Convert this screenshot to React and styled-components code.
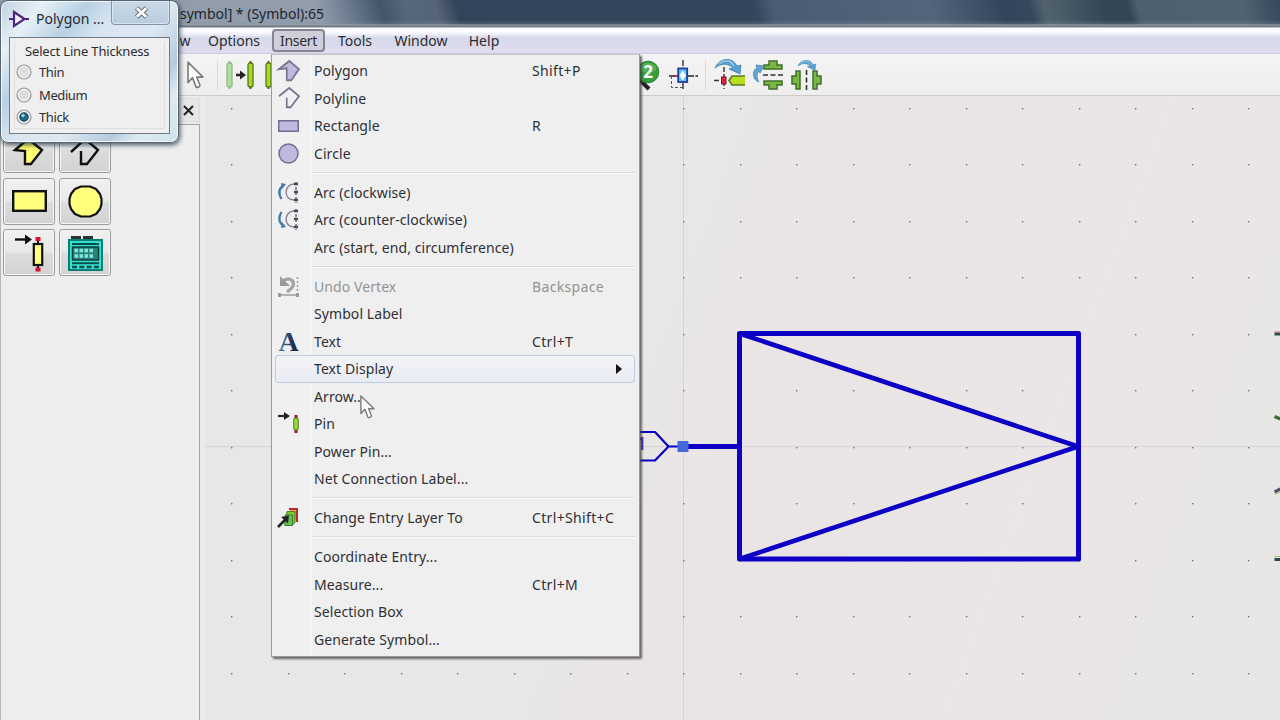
import React from 'react';
import styled, { createGlobalStyle, css } from 'styled-components';

const GlobalStyle = createGlobalStyle`
  * {
    box-sizing: border-box;
  }

  body {
    margin: 0;
    overflow: hidden;
    font-family: 'Noto Sans', 'Open Sans', sans-serif;
    font-size: 14px;
    color: #2c2c30;
  }

  svg {
    display: block;
    flex: none;
    overflow: visible;
  }
`;

const StyledWindow = styled.div`
  position: relative;
  display: flex;
  flex-direction: column;
  width: 1280px;
  height: 720px;
  overflow: hidden;
  background: #efefef;
`;

const StyledTitleBar = styled.header`
  flex: none;
  height: 28px;
  padding: 4px 0 0 180px;
  background: linear-gradient(
      to bottom,
      transparent 20px,
      rgba(130, 145, 155, 0.3) 24px,
      #a0a9b3 25px,
      #59636f 26px,
      #8d96a0 27px,
      #e3e4ec 28px
    ),
    linear-gradient(
      74deg,
      #929dac 0,
      #929dac 310px,
      #66768a 345px,
      #44546a 372px,
      #56677b 395px,
      #566579 425px,
      #33445a 445px,
      #34465c 730px,
      #4a5c74 750px,
      #53657a 900px,
      #33455b 970px,
      #34475c 995px,
      #52636f 1010px,
      #344755 1065px,
      #334655 1090px,
      #4e606e 1100px,
      #516270 1200px,
      #33465c 1240px,
      #33465c 1276px,
      #5c4a48 1279px
    );
  line-height: 19px;
  letter-spacing: 0;
  color: #20242c;
  white-space: nowrap;
`;

const StyledMenuBar = styled.nav`
  display: flex;
  flex: none;
  height: 26px;
  padding: 1px 0 0 173px;
  border-bottom: 1px solid #cfccd9;
  background: linear-gradient(#fafaff 0, #fafaff 4px, #ebebf7 7px, #d6daea 9px, #e0dcf0 100%);
`;

const StyledMenuTitle = styled.button`
  width: ${({ $width }) => $width}px;
  height: 23px;
  margin: 0 ${({ $gap = 4 }) => $gap}px 0 0;
  padding: 0;
  border: 1px solid transparent;
  border-radius: 4px;
  background: none;
  font: inherit;
  line-height: 22px;
  color: inherit;

  ${({ $open }) =>
    $open &&
    css`
      border: 2px solid #85838f;
      background: linear-gradient(#cfced8, #d0cedd);
      line-height: 20px;
      letter-spacing: -0.3px;
    `}
`;

const StyledToolbar = styled.div`
  display: flex;
  flex: none;
  align-items: center;
  height: 42px;
  padding-left: 187px;
  border-bottom: 1px solid #cacaca;
  background: linear-gradient(#f4f4f5, #eeeeef);
`;

const StyledTool = styled.span`
  margin-left: ${({ $gap = 0 }) => $gap}px;
`;

const StyledToolDivider = styled.span`
  width: 1px;
  height: 30px;
  margin-left: ${({ $gap = 0 }) => $gap}px;
  background: #dadada;
`;

const StyledWorkspace = styled.main`
  display: flex;
  flex: 1;
  min-height: 0;
`;

const StyledSidebar = styled.aside`
  flex: none;
  width: 205px;
  padding-top: 2px;
  background: #ebebeb;
`;

const StyledSidebarHeader = styled.div`
  display: flex;
  align-items: center;
  justify-content: flex-end;
  width: 200px;
  height: 24px;
  padding-right: 6px;
  border: 1px solid #dcdcdc;
  background: #e6e6e6;
`;

const StyledPalette = styled.div`
  display: grid;
  grid-template-columns: repeat(2, 52px);
  grid-auto-rows: 47px;
  grid-gap: 4.5px 4px;
  width: 200px;
  height: 600px;
  margin-top: 2px;
  padding: 1px 0 0 2px;
  border: 1px solid #a3a3a3;
  border-left-color: #b5b5b5;
  background: #eeeeee;
`;

const StyledPaletteButton = styled.button`
  display: flex;
  align-items: center;
  justify-content: center;
  padding: ${({ $drop = 0 }) => $drop}px 0 0;
  border: 1px solid #9b9b9b;
  border-radius: 3px;
  background: linear-gradient(#f1f1f1 0, #e8e8e8 48%, #dcdcdc 54%, #d2d2d2 100%);
  box-shadow: inset 0 0 0 1px #f6f6f6;
`;

const StyledCanvas = styled.div`
  flex: 1;
  min-width: 0;
  background: linear-gradient(110deg, #e8e6e6 0, #e8e7e6 42%, #eae5e4 52%, #e9e6e5 74%, #e8e7e6 100%);
`;

const StyledMenu = styled.div`
  position: absolute;
  top: 54px;
  left: 271px;
  width: 369px;
  height: 603px;
  padding: 2px 4px 0 3px;
  border: 1px solid #9a9a9a;
  border-top-color: #c6c4cf;
  background: linear-gradient(
    to right,
    #f0f0f1 0,
    #f0f0f1 37px,
    #e4e4e5 37px,
    #fafafa 38px,
    #efeff0 40px,
    #efefef 100%
  );
  box-shadow: 2px 2px 2px rgba(60, 60, 60, 0.75);
`;

const StyledMenuItem = styled.div`
  display: grid;
  grid-template-columns: 38px 218px 1fr 18px;
  align-items: center;
  height: 27.54px;
  border: 1px solid transparent;
  border-radius: 3px;
  white-space: nowrap;
  color: ${({ $disabled }) => ($disabled ? '#939393' : '#303034')};

  ${({ $active }) =>
    $active &&
    css`
      border-color: #bfcbe4;
      background: linear-gradient(rgba(243, 244, 248, 0.9), rgba(232, 235, 243, 0.9));
    `}
`;

const StyledMenuLabel = styled.span`
  letter-spacing: ${({ $tracking = 0.08 }) => $tracking}px;
`;

const StyledMenuDivider = styled.div`
  height: 2px;
  margin: 4.7px 0 4.7px 37px;
  border-top: 1px solid #dcdcdc;
  border-bottom: 1px solid #fafafa;
`;

const StyledDialog = styled.section`
  position: absolute;
  top: 0;
  left: 0;
  width: 179px;
  height: 143px;
  padding: 0 8px 8px;
  border: 1px solid #56636e;
  border-radius: 8px;
  background: linear-gradient(
    130deg,
    #c0d2e2 0,
    #e5f0f6 15%,
    #b8d0e4 30%,
    #d9e6f1 43%,
    #dbe8f2 60%,
    #b7cadd 76%,
    #dceaf3 85%,
    #cfe2ec 100%
  );
  box-shadow:
    inset 0 0 0 1px rgba(245, 252, 255, 0.9),
    1px 2px 5px rgba(20, 35, 50, 0.75);
`;

const StyledDialogTitle = styled.div`
  display: flex;
  align-items: flex-start;
  height: 36px;
  color: #262a33;

  svg {
    margin-top: 9px;
  }

  span {
    width: 76px;
    margin: 8px 0 0 7px;
    white-space: nowrap;
  }
`;

const StyledDialogClose = styled.button`
  display: flex;
  align-items: flex-start;
  justify-content: center;
  width: 59px;
  height: 24px;
  padding: 0 0 0 2px;
  border: 1px solid #8494a8;
  border-top: 0;
  border-radius: 0 0 4px 4px;
  background: linear-gradient(#c9d8e6, #b9ccdf);
  box-shadow: inset 0 0 0 1px rgba(235, 244, 250, 0.6);

  svg {
    margin-top: 5px;
  }
`;

const StyledDialogBody = styled.div`
  height: 97px;
  padding: 4px 4px;
  border: 1px solid #6f7a84;
  background: #efefef;
  font-size: 13px;
`;

const StyledGroup = styled.fieldset`
  height: 87px;
  margin: 0;
  padding: 0 0 0 1px;
  border: 1px solid #dedede;
  border-top: 0;
`;

const StyledGroupTitle = styled.div`
  margin-left: 9px;
  height: 19px;
  line-height: 19px;
  letter-spacing: -0.17px;
  white-space: nowrap;
`;

const StyledRadio = styled.label`
  display: flex;
  align-items: center;
  height: 22.5px;
  letter-spacing: -0.4px;

  span {
    margin-left: 7px;
  }
`;

const StyledCursor = styled.div`
  position: absolute;
  top: 395px;
  left: 360px;
`;

const PointerIcon = ({ width = 17, height = 28 }) => (
  <svg width={width} height={height} viewBox="0 0 17 26" preserveAspectRatio="none">
    <path
      d="M1 1v19l4.5-4.5 3.5 8.5c1 1.2 4 0 4-1.5l-3.2-7.6H16z"
      fill="#fbfbfb"
      stroke="#7b7b7b"
      strokeWidth="1.6"
      strokeLinejoin="round"
    />
  </svg>
);

const Bar = ({ x, pale }) => (
  <g>
    <path d={`M${x + 2.5} 0v28`} stroke={pale ? '#8fb985' : '#4c6b1c'} strokeWidth="2" />
    <rect
      x={x}
      y="2"
      width="5"
      height="24"
      rx="2"
      fill={pale ? '#b3dea3' : '#a8da1e'}
      stroke={pale ? '#8dbb84' : '#55761d'}
      strokeWidth="1.3"
    />
  </g>
);

const ReplacePinIcon = () => (
  <svg width="43" height="28" viewBox="0 0 43 28">
    <Bar x={0} pale />
    <Bar x={21} />
    <Bar x={39} />
    <path d="M9 14h5" stroke="#222" strokeWidth="2.6" />
    <path d="M13 9.5l6 4.5-6 4.5z" fill="#222" />
  </svg>
);

const ZoomTwoIcon = () => (
  <svg width="28" height="30" viewBox="0 0 28 30">
    <path d="M9 20l9 9" stroke="#222" strokeWidth="4" />
    <circle cx="17" cy="12" r="10.8" fill="#35a13c" stroke="#258030" />
    <ellipse cx="17" cy="8" rx="8" ry="5" fill="#69bc62" opacity="0.6" />
    <text x="17" y="18" fill="#fff" fontSize="17" fontWeight="700" textAnchor="middle">
      2
    </text>
  </svg>
);

const OriginIcon = () => (
  <svg width="30" height="30" viewBox="0 0 30 30">
    <path d="M15 0v8M15 23v7M1 16h9M20 16h10" stroke="#222" strokeWidth="1.3" strokeDasharray="6 1.5" />
    <path d="M3.500 16v11.500h11" fill="none" stroke="#555" strokeDasharray="3 2" />
    <path d="M5 16h5" stroke="#a11d4a" strokeWidth="1.6" />
    <rect x="10.2" y="8.500" width="9" height="13.500" fill="#5ec8f5" stroke="#233aa2" strokeWidth="1.8" />
    <path d="M14.700 10.500l3.300 5-3.300 5-3.300-5z" fill="#effcff" />
  </svg>
);

const RotateArrow = () => (
  <>
    <path d="M0 9C4-1 17-3 22 7l4-1-1 9-11-5 4-1C13 4 6 4 0 9z" fill="#5a9fce" stroke="#3e82b3" strokeWidth="0.8" />
    <path d="M4 5c5-5 12-4 15 2" fill="none" stroke="#a5d0ea" strokeWidth="1.3" />
  </>
);

const RotateIcon = () => (
  <svg width="31" height="31" viewBox="0 0 31 31">
    <path d="M10 8v22M0 21.500h9" stroke="#333" strokeWidth="1.4" strokeDasharray="5 2" />
    <path d="M15 21.500l3-4.500h13v9H18z" fill="#b6df22" />
    <path d="M31 17H18l-3 4.500 3 4.500h13" fill="none" stroke="#587b29" strokeWidth="1.6" />
    <rect x="7.5" y="18" width="4.5" height="7" fill="#df243b" stroke="#84172a" />
    <g transform="translate(1 0)">
      <RotateArrow />
    </g>
  </svg>
);

const FlipVerticalIcon = () => (
  <svg width="32" height="30" viewBox="0 0 32 30">
    <g fill="#79b943" stroke="#436d2c" strokeWidth="1.5">
      <path d="M17 1h8v4h5v4H12V5h5z" />
      <path d="M12 21h18v4h-5v4h-8v-4h-5z" />
    </g>
    <path d="M11 15h20" stroke="#333" strokeWidth="1.6" strokeDasharray="5 2.5" />
    <path d="M7 22C0 20 0 10 5 8L4 5l8 1-4 7-1-2c-3 3-2 8 0 11z" fill="#63a4d2" stroke="#4286b4" strokeWidth="0.8" />
  </svg>
);

const FlipHorizontalIcon = () => (
  <svg width="31" height="30" viewBox="0 0 31 30">
    <g fill="#79b943" stroke="#436d2c" strokeWidth="1.5">
      <path d="M9 11v18H5v-5H1v-8h4v-5z" />
      <path d="M22 11v18h4v-5h4v-8h-4v-5z" />
    </g>
    <path d="M15.500 10v20" stroke="#333" strokeWidth="1.6" strokeDasharray="5 2.5" />
    <g transform="translate(7 0) scale(.68)">
      <RotateArrow />
    </g>
  </svg>
);

const polygonPath = 'M0 11L16 0l15 11-12 15h-7v-16z';

const PolygonButtonIcon = () => (
  <svg width="30" height="28" viewBox="0 0 30 28">
    <path d="M1 12L14 1l14 11-11 14h-6V13z" fill="#ffff72" stroke="#111" strokeWidth="2.4" />
  </svg>
);

const PolylineButtonIcon = () => (
  <svg width="30" height="28" viewBox="0 0 30 28">
    <path d="M1 14L15 1l13 11-11 14h-6V13" fill="none" stroke="#111" strokeWidth="2.4" />
  </svg>
);

const RectangleButtonIcon = () => (
  <svg width="35" height="22" viewBox="0 0 35 22">
    <rect x="1.2" y="1.2" width="32.6" height="19.6" fill="#ffff7d" stroke="#111" strokeWidth="2.4" />
  </svg>
);

const CircleButtonIcon = () => (
  <svg width="35" height="33" viewBox="0 0 35 33">
    <path
      d="M13 1.500h9l6 2.500 4 5 1.500 5v5l-1.500 5-4 5-6 2.500h-9L7 29l-4-5-1.500-5v-5L3 9l4-5z"
      fill="#ffff7d"
      stroke="#111"
      strokeWidth="2.2"
      strokeLinejoin="round"
    />
  </svg>
);

const PinButtonIcon = () => (
  <svg width="28" height="36" viewBox="0 0 28 36">
    <path d="M0 3.5h12" stroke="#111" strokeWidth="2.4" />
    <path d="M10-1.5l7 5-7 5z" fill="#111" />
    <path d="M23 2v32" stroke="#111" strokeWidth="2" />
    <rect x="18.8" y="8" width="8.4" height="21" fill="#ffff7d" stroke="#111" strokeWidth="2.2" />
    <path d="M20.5 1h5v4h-5zM20.5 31.5h5v4h-5z" fill="#d51231" />
  </svg>
);

const InstrumentButtonIcon = () => (
  <svg width="35" height="35" viewBox="0 0 35 35">
    <path d="M3 0h10v4H3zM15 0h10v4H15z" fill="#293433" />
    <rect x="1" y="4" width="33" height="30" fill="#35e2cf" stroke="#087d75" strokeWidth="2" />
    <path d="M4 8h27" stroke="#064f4a" strokeWidth="2" />
    <rect x="4.5" y="11" width="26" height="13" fill="#2e817b" stroke="#06403d" strokeWidth="1.5" />
    <path d="M6.5 14.5h20M6.5 20h20" stroke="#7ee7dc" strokeWidth="3.5" strokeDasharray="3.5 1.5" />
    <path d="M4 27.2h27" stroke="#064f4a" strokeWidth="2" />
    <path d="M4 31h27" stroke="#064f4a" strokeWidth="2.4" strokeDasharray="5 2.3" />
  </svg>
);

const PolygonIcon = ({ fill }) => (
  <svg width="20" height="20" viewBox="0 0 31 27" preserveAspectRatio="none">
    <path
      d={fill === 'none' ? 'M0 11L16 0l15 11-13 15h-6v-13' : polygonPath}
      fill={fill}
      stroke="#77758f"
      strokeWidth="2.6"
    />
  </svg>
);

const RectangleIcon = () => (
  <svg width="21" height="12" viewBox="0 0 21 12">
    <rect x="0.75" y="0.75" width="19.5" height="10.5" fill="#bdb9df" stroke="#716f8f" strokeWidth="1.5" />
  </svg>
);

const CircleIcon = () => (
  <svg width="21" height="21" viewBox="0 0 21 21">
    <circle cx="10.5" cy="10.5" r="9.5" fill="#bdb9df" stroke="#716f8f" strokeWidth="1.5" />
  </svg>
);

const ArcIcon = ({ counter }) => (
  <svg width="21" height="21" viewBox="0 0 21 21">
    <path d="M16 2C6 2 5 18 16 18" fill="none" stroke="#8b8196" strokeWidth="1.4" />
    <path d="M18 0v21" stroke="#55505b" strokeWidth="1.2" strokeDasharray="3 2" />
    <path d="M16 2h4M16 10h4M16 18h4" stroke="#4a4550" strokeWidth="2.6" />
    <g transform={counter ? 'translate(0 20) scale(1 -1)' : undefined}>
      <path d="M3.500 17C0 11 1 6 6 3" fill="none" stroke="#3f7cac" strokeWidth="2.2" />
      <path d="M3 1l5 1-4 5z" fill="#3f7cac" />
    </g>
  </svg>
);

const UndoVertexIcon = () => (
  <svg width="21" height="21" viewBox="0 0 21 21" fill="none" stroke="#a3a3a3">
    <path d="M4 6C10 0 17 4 15 10c-1 3-4 4-6 6" strokeWidth="3.2" />
    <path d="M2 0v10h10z" fill="#9b9b9b" stroke="none" />
    <path d="M0 19h21" strokeWidth="1.6" />
    <path d="M19.5 1v19" strokeWidth="1.6" strokeDasharray="2 2" />
    <path d="M0 17h3v4H0zM18 17h3v4h-3z" fill="#9b9b9b" stroke="none" />
  </svg>
);

const TextIcon = () => (
  <svg width="21" height="21" viewBox="0 0 21 21">
    <defs>
      <linearGradient id="letter" x1="0" x2="1">
        <stop offset="0" stopColor="#537fae" />
        <stop offset="0.6" stopColor="#243760" />
        <stop offset="1" stopColor="#161c3d" />
      </linearGradient>
    </defs>
    <text
      x="10.5"
      y="20"
      textAnchor="middle"
      fontFamily="Liberation Serif, serif"
      fontSize="28"
      fontWeight="700"
      fill="url(#letter)"
    >
      A
    </text>
  </svg>
);

const PinIcon = () => (
  <svg width="21" height="21" viewBox="0 0 21 21">
    <path d="M0 3h8" stroke="#222" strokeWidth="2.2" />
    <path d="M6-1l6 4-6 4z" fill="#222" />
    <path d="M18 2v18" stroke="#9b1a32" strokeWidth="3" />
    <rect x="15.8" y="5" width="4.4" height="12" rx="1" fill="#9edd2b" stroke="#4d7129" />
  </svg>
);

const LayerIcon = () => (
  <svg width="21" height="21" viewBox="0 0 21 21">
    <path d="M11 2h8v13" fill="#f2a83d" stroke="#b82a2f" strokeWidth="2" />
    <path d="M9 4.500h8v11l-3 3H7z" fill="#83c735" stroke="#42802c" />
    <path d="M7 8h7.500v10.500H7z" fill="#64c746" stroke="#348034" />
    <path d="M0 20l8-8" stroke="#242424" strokeWidth="2.6" />
    <path d="M3 10l8-1.500-1 8z" fill="#242424" />
  </svg>
);

const menuTitles = [
  { label: 'w', width: 24, gap: 3 },
  { label: 'Options', width: 68, gap: 4 },
  { label: 'Insert', width: 53, gap: 4 , open: true },
  { label: 'Tools', width: 52, gap: 4 },
  { label: 'Window', width: 72, gap: 4 },
  { label: 'Help', width: 46, gap: 0 },
];

const insertMenu = [
  [
    { label: 'Polygon', keys: 'Shift+P', icon: <PolygonIcon fill="#bdb9df" /> },
    { label: 'Polyline', icon: <PolygonIcon fill="none" /> },
    { label: 'Rectangle', keys: 'R', icon: <RectangleIcon /> },
    { label: 'Circle', icon: <CircleIcon /> },
  ],
  [
    { label: 'Arc (clockwise)', icon: <ArcIcon /> },
    { label: 'Arc (counter-clockwise)', icon: <ArcIcon counter /> },
    { label: 'Arc (start, end, circumference)' },
  ],
  [
    { label: 'Undo Vertex', keys: 'Backspace', icon: <UndoVertexIcon />, disabled: true },
    { label: 'Symbol Label' },
    { label: 'Text', keys: 'Ctrl+T', icon: <TextIcon /> },
    { label: 'Text Display', active: true },
    { label: 'Arrow...' },
    { label: 'Pin', icon: <PinIcon /> },
    { label: 'Power Pin...' },
    { label: 'Net Connection Label...' },
  ],
  [{ label: 'Change Entry Layer To', keys: 'Ctrl+Shift+C', icon: <LayerIcon /> }],
  [
    { label: 'Coordinate Entry...' },
    { label: 'Measure...', keys: 'Ctrl+M' },
    { label: 'Selection Box' },
    { label: 'Generate Symbol...' },
  ],
];

const MenuIconCell = styled.span`
  display: flex;
  align-items: center;
  justify-content: center;
  width: 21px;
  margin-left: 2px;
`;

const InsertMenu = () => (
  <StyledMenu>
    {insertMenu.map((group, i) => (
      <React.Fragment key={i}>
        {i > 0 && <StyledMenuDivider />}
        {group.map(({ label, keys, icon, active, disabled }) => (
          <StyledMenuItem key={label} $active={active} $disabled={disabled}>
            <MenuIconCell>{icon}</MenuIconCell>
            <StyledMenuLabel>{label}</StyledMenuLabel>
            <StyledMenuLabel $tracking={0.35}>{keys}</StyledMenuLabel>
            {active && (
              <svg width="6" height="10" viewBox="0 0 6 10">
                <path d="M0 0l6 5-6 5z" fill="#111" />
              </svg>
            )}
          </StyledMenuItem>
        ))}
      </React.Fragment>
    ))}
  </StyledMenu>
);

const gridX = Array.from({ length: 19 }, (_, i) => 231.5 + i * 56.5);
const gridY = Array.from({ length: 11 }, (_, i) => 108 + i * 56.5);

const Schematic = () => (
  <svg width="1075" height="624" viewBox="205 96 1075 624">
    <path d="M683.5 96v624M205 446.5h1075" stroke="#d6d3d3" />
    {gridX.map(x =>
      gridY.map(y => (
        <rect key={`${x}-${y}`} x={Math.floor(x)} y={Math.floor(y)} width="1.4" height="1.4" fill="#747272" />
      )),
    )}
    <g fill="none" stroke="#0c00c4" strokeLinejoin="round">
      <path d="M739.5 333.5h339v225.5h-339z" strokeWidth="5" />
      <path d="M739.5 333.5L1078 446.5 739.5 559" strokeWidth="4.6" />
      <path d="M683 446.5h57" strokeWidth="5" />
      <path d="M630 432h25l13.5 14.5L655 460.5H630M668 446.5h15" strokeWidth="2.2" />
    </g>
    <text x="636.5" y="450" fontSize="17" fontWeight="600" fill="#3731b4">
      1
    </text>
    <rect x="677.5" y="441" width="11" height="11" fill="#4769d8" />
    <g fill="none" stroke="#31484a" strokeWidth="3.2">
      <path d="M1274.5 334h6M1274.5 559.5h6" />
      <path d="M1274.5 416.5l6 2.500" stroke="#3f6a2d" />
      <path d="M1274.5 492l6-3" stroke="#5b5162" />
    </g>
    <path d="M1274.5 332h6" stroke="#b77383" />
    <path d="M1274.5 556.5h6M1275 494.5l5-2.500" stroke="#91bd79" />
  </svg>
);

const thicknesses = ['Thin', 'Medium', 'Thick'];

const RadioMark = ({ checked }) => (
  <svg width="16" height="16" viewBox="0 0 16 16">
    <circle cx="8" cy="8" r="7" fill="#f2f2f2" stroke="#969696" strokeWidth="1.2" />
    <circle cx="8" cy="8" r="5" fill="#dedede" />
    {checked && (
      <>
        <circle cx="8" cy="8" r="4.2" fill="#206989" stroke="#17394c" />
        <circle cx="7" cy="6.5" r="1.7" fill="#8ed6ea" />
      </>
    )}
  </svg>
);

const ThicknessDialog = () => (
  <StyledDialog>
    <StyledDialogTitle>
      <svg width="20" height="18" viewBox="0 0 20 18">
        <path d="M0 9h5M15 9h5" stroke="#4e247d" strokeWidth="2" />
        <path d="M5 2l10.5 7L5 16z" fill="#f6f2fb" stroke="#4e247d" strokeWidth="2.2" />
      </svg>
      <span>Polygon ...</span>
      <StyledDialogClose aria-label="Close">
        <svg width="15" height="13" viewBox="0 0 15 13">
          <path d="M2.5 2l10 9M12.5 2l-10 9" stroke="#6f7782" strokeWidth="5" />
          <path d="M2.8 2.3l9.4 8.4M12.2 2.3l-9.4 8.4" stroke="#fff" strokeWidth="2.6" />
        </svg>
      </StyledDialogClose>
    </StyledDialogTitle>
    <StyledDialogBody>
      <StyledGroup>
        <StyledGroupTitle>Select Line Thickness</StyledGroupTitle>
        {thicknesses.map(name => (
          <StyledRadio key={name}>
            <RadioMark checked={name === 'Thick'} />
            <span>{name}</span>
          </StyledRadio>
        ))}
      </StyledGroup>
    </StyledDialogBody>
  </StyledDialog>
);

const App = () => (
  <>
    <GlobalStyle />
    <StyledWindow>
      <StyledTitleBar>symbol] * (Symbol):65</StyledTitleBar>

      <StyledMenuBar>
        {menuTitles.map(({ label, width, gap, open }) => (
          <StyledMenuTitle key={label} $width={width} $gap={gap} $open={open}>
            {label}
          </StyledMenuTitle>
        ))}
      </StyledMenuBar>

      <StyledToolbar>
        <PointerIcon />
        <StyledToolDivider $gap={13} />
        <StyledTool $gap={9}>
          <ReplacePinIcon />
        </StyledTool>
        <StyledTool $gap={361}>
          <ZoomTwoIcon />
        </StyledTool>
        <StyledTool $gap={9}>
          <OriginIcon />
        </StyledTool>
        <StyledToolDivider $gap={7} />
        <StyledTool $gap={8}>
          <RotateIcon />
        </StyledTool>
        <StyledTool $gap={7}>
          <FlipVerticalIcon />
        </StyledTool>
        <StyledTool $gap={7}>
          <FlipHorizontalIcon />
        </StyledTool>
      </StyledToolbar>

      <StyledWorkspace>
        <StyledSidebar>
          <StyledSidebarHeader>
            <svg width="9" height="9" viewBox="0 0 9 9">
              <path d="M0 0l9 9M9 0L0 9" stroke="#222" strokeWidth="2" />
            </svg>
          </StyledSidebarHeader>
          <StyledPalette>
            <StyledPaletteButton $drop={5}>
              <PolygonButtonIcon />
            </StyledPaletteButton>
            <StyledPaletteButton $drop={5}>
              <PolylineButtonIcon />
            </StyledPaletteButton>
            <StyledPaletteButton>
              <RectangleButtonIcon />
            </StyledPaletteButton>
            <StyledPaletteButton>
              <CircleButtonIcon />
            </StyledPaletteButton>
            <StyledPaletteButton $drop={2}>
              <PinButtonIcon />
            </StyledPaletteButton>
            <StyledPaletteButton $drop={2}>
              <InstrumentButtonIcon />
            </StyledPaletteButton>
          </StyledPalette>
        </StyledSidebar>
        <StyledCanvas>
          <Schematic />
        </StyledCanvas>
      </StyledWorkspace>

      <InsertMenu />
      <ThicknessDialog />
      <StyledCursor>
        <PointerIcon width={15} height={24} />
      </StyledCursor>
    </StyledWindow>
  </>
);

export default App;
